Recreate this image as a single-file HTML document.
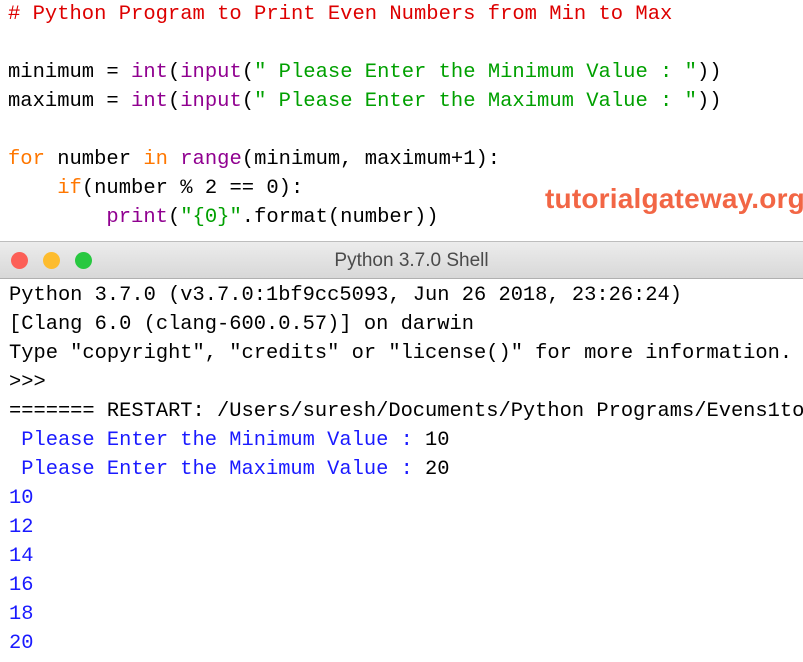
<!DOCTYPE html>
<html><head><style>
body{margin:0;width:803px;height:661px;overflow:hidden;background:#fff;position:relative;font-family:"Liberation Mono",monospace;}
pre{margin:0;font-family:"Liberation Mono",monospace;white-space:pre;}
#code{position:absolute;left:8px;top:0;font-size:20.5px;line-height:29px;color:#000;}
.c{color:#dd0000}.k{color:#ff7700}.b{color:#900090}.s{color:#00a000}.u{color:#1a1aff}
#logo{position:absolute;left:545px;top:183px;font-family:"Liberation Sans",sans-serif;font-weight:bold;font-size:28px;color:#f26645;letter-spacing:0.2px;white-space:nowrap}
#win{position:absolute;left:0;top:241px;width:803px;height:420px;border-top:1px solid #bdbdbd;}
#title{height:36px;background:linear-gradient(#ececec,#d8d8d8);border-bottom:1px solid #b0b0b0;position:relative;font-family:"Liberation Sans",sans-serif;font-size:19px;color:#4a4a4a;text-align:center;line-height:38px;padding-left:20px}
.d{position:absolute;top:10px;width:17px;height:17px;border-radius:50%}
#shell{position:absolute;left:9px;top:39px;font-size:20.4px;line-height:29px;}
</style></head><body>
<pre id="code"><span class="c"># Python Program to Print Even Numbers from Min to Max</span>

minimum = <span class="b">int</span>(<span class="b">input</span>(<span class="s">" Please Enter the Minimum Value : "</span>))
maximum = <span class="b">int</span>(<span class="b">input</span>(<span class="s">" Please Enter the Maximum Value : "</span>))

<span class="k">for</span> number <span class="k">in</span> <span class="b">range</span>(minimum, maximum+1):
    <span class="k">if</span>(number % 2 == 0):
        <span class="b">print</span>(<span class="s">"{0}"</span>.format(number))</pre>
<div id="logo">tutorialgateway.org</div>
<div id="win">
<div id="title"><div class="d" style="left:11px;background:#fc5f57"></div><div class="d" style="left:43px;background:#fdbc2e"></div><div class="d" style="left:75px;background:#28c840"></div>Python 3.7.0 Shell</div>
<pre id="shell">Python 3.7.0 (v3.7.0:1bf9cc5093, Jun 26 2018, 23:26:24)
[Clang 6.0 (clang-600.0.57)] on darwin
Type "copyright", "credits" or "license()" for more information.
&gt;&gt;&gt;
======= RESTART: /Users/suresh/Documents/Python Programs/Evens1to
<span class="u"> Please Enter the Minimum Value : </span>10
<span class="u"> Please Enter the Maximum Value : </span>20
<span class="u">10
12
14
16
18
20</span></pre>
</div>
</body></html>
